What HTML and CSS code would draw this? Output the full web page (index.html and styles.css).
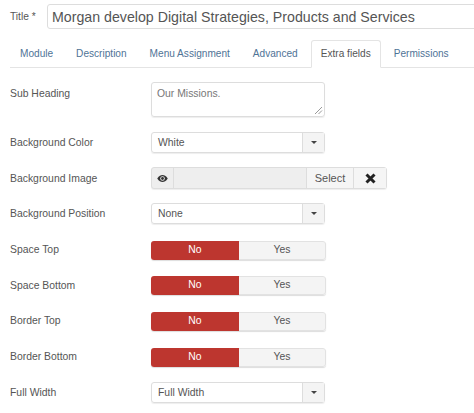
FILE: index.html
```html
<!DOCTYPE html>
<html lang="en">
<head>
  <meta charset="UTF-8" />
  <title>Extra fields</title>
  <link rel="stylesheet" href="styles.css">
</head>
<body>
  <header class="title-row">
    <label class="title-label">Title *</label>
    <input class="title-input" type="text" value="Morgan develop Digital Strategies, Products and Services">
  </header>

  <nav class="tabs">
    <a href="#">Module</a>
    <a href="#">Description</a>
    <a href="#">Menu Assignment</a>
    <a href="#">Advanced</a>
    <a href="#" class="active">Extra fields</a>
    <a href="#">Permissions</a>
  </nav>

  <main class="fields">
    <div class="field field-area">
      <label>Sub Heading</label>
      <div class="textarea">Our Missions.
        <svg class="grip" width="9" height="9" viewBox="0 0 9 9"><path d="M1 8 8 1M4.500 8 8 4.500" stroke="#999" fill="none"/></svg>
      </div>
    </div>
    <div class="field">
      <label>Background Color</label>
      <div class="select"><span>White</span><i class="caret"></i></div>
    </div>
    <div class="field">
      <label>Background Image</label>
      <div class="media">
        <span class="eye">
          <svg width="11" height="7" viewBox="0 0 12 8"><path d="M0 4C2 1 4 0 6 0s4 1 6 4c-2 3-4 4-6 4S2 7 0 4Z" fill="#333"/><circle cx="6" cy="4" r="2.600" fill="#eee"/><circle cx="6" cy="4" r="1.600" fill="#333"/></svg>
        </span>
        <span class="media-value"></span>
        <span class="media-btn">Select</span>
        <span class="media-btn media-clear">
          <svg width="11" height="11" viewBox="0 0 11 11"><path d="M1.500 1.500l8 8M9.500 1.500l-8 8" stroke="#222" stroke-width="3" fill="none"/></svg>
        </span>
      </div>
    </div>
    <div class="field">
      <label>Background Position</label>
      <div class="select"><span>None</span><i class="caret"></i></div>
    </div>
    <div class="field">
      <label>Space Top</label>
      <div class="toggle"><span class="no">No</span><span class="yes">Yes</span></div>
    </div>
    <div class="field">
      <label>Space Bottom</label>
      <div class="toggle"><span class="no">No</span><span class="yes">Yes</span></div>
    </div>
    <div class="field">
      <label>Border Top</label>
      <div class="toggle"><span class="no">No</span><span class="yes">Yes</span></div>
    </div>
    <div class="field">
      <label>Border Bottom</label>
      <div class="toggle"><span class="no">No</span><span class="yes">Yes</span></div>
    </div>
    <div class="field">
      <label>Full Width</label>
      <div class="select"><span>Full Width</span><i class="caret"></i></div>
    </div>
  </main>
</body>
</html>
```

FILE: styles.css
```css
body {
  margin: 0;
  background: #fff;
  color: #555;
  font-family: "Liberation Sans", Arial, sans-serif;
  font-size: 10.4px;
  overflow: hidden;
}

.title-row {
  display: flex;
  align-items: center;
  padding: 4px 0 0 10px;
  height: 25px;
}

.title-label {
  width: 37px;
  flex: none;
  font-size: 10.2px;
  white-space: nowrap;
}

.title-input {
  width: 440px;
  height: 25px;
  flex: none;
  box-sizing: border-box;
  padding: 0 4px;
  border: 1px solid #ddd;
  border-radius: 3px;
  color: #555;
  font-family: inherit;
  font-size: 14.2px;
}

.tabs {
  display: flex;
  align-items: flex-end;
  height: 27px;
  margin: 11px 0 0 10px;
  border-bottom: 1px solid #e4e4e4;
}

.tabs a {
  box-sizing: border-box;
  height: 27px;
  padding: 0 9px;
  margin-right: 3px;
  border: 1px solid transparent;
  font-size: 10.1px;
  line-height: 26px;
  color: #4f7396;
  text-decoration: none;
  white-space: nowrap;
}

.tabs a.active {
  height: 28px;
  margin-bottom: -1px;
  border-color: #e4e4e4;
  border-bottom-color: #fff;
  border-radius: 3px 3px 0 0;
  color: #555;
}

.fields {
  display: grid;
  grid-template-rows: 42.7px;
  grid-auto-rows: 35.7px;
  padding: 14px 0 0 10px;
}

.field {
  display: grid;
  grid-template-columns: 141px auto;
  justify-content: start;
  align-items: center;
}

.field-area {
  align-items: start;
}

.field-area label {
  line-height: 23px;
}

.textarea {
  position: relative;
  box-sizing: border-box;
  width: 174px;
  height: 35px;
  padding: 5px;
  border: 1px solid #ddd;
  border-radius: 3px;
  box-shadow: 0 1px 1px #eee;
  color: #777;
}

.grip {
  position: absolute;
  right: 1px;
  bottom: 1px;
}

.select {
  display: flex;
  box-sizing: border-box;
  width: 174px;
  height: 21px;
  border: 1px solid #ddd;
  border-radius: 3px;
  box-shadow: 0 1px 1px #eee;
  line-height: 19px;
}

.select span {
  flex: 1;
  padding-left: 6px;
}

.caret {
  position: relative;
  width: 21px;
  border-left: 1px solid #ddd;
  background: #f4f4f4;
}

.caret::after {
  content: "";
  position: absolute;
  left: 8px;
  top: 8px;
  border: 3px solid transparent;
  border-top-color: #444;
  border-bottom: 0;
}

.media {
  display: flex;
  box-sizing: border-box;
  width: 236px;
  height: 22px;
  border: 1px solid #ddd;
  border-radius: 3px;
  box-shadow: 0 1px 1px #eee;
  background: #eee;
  line-height: 20px;
}

.eye {
  display: flex;
  align-items: center;
  justify-content: center;
  width: 21px;
  border-right: 1px solid #ddd;
}

.media-value {
  flex: 1;
}

.media-btn {
  box-sizing: border-box;
  width: 47px;
  border-left: 1px solid #ddd;
  background: #f5f5f5;
  font-size: 11px;
  text-align: center;
}

.media-clear {
  display: flex;
  align-items: center;
  justify-content: center;
  width: 33px;
}

.toggle {
  display: flex;
  box-sizing: border-box;
  width: 175px;
  height: 19px;
  margin-top: 1px;
  border-radius: 3px;
  overflow: hidden;
  box-shadow: 0 1px 1px #ddd;
  line-height: 18px;
  text-align: center;
}

.toggle span {
  box-sizing: border-box;
}

.no {
  width: 88px;
  background: #bd362f;
  color: #fff;
}

.yes {
  flex: 1;
  background: #f4f4f4;
  border: 1px solid #e2e2e2;
  border-left: 0;
  border-radius: 0 3px 3px 0;
  line-height: 16px;
}
```
